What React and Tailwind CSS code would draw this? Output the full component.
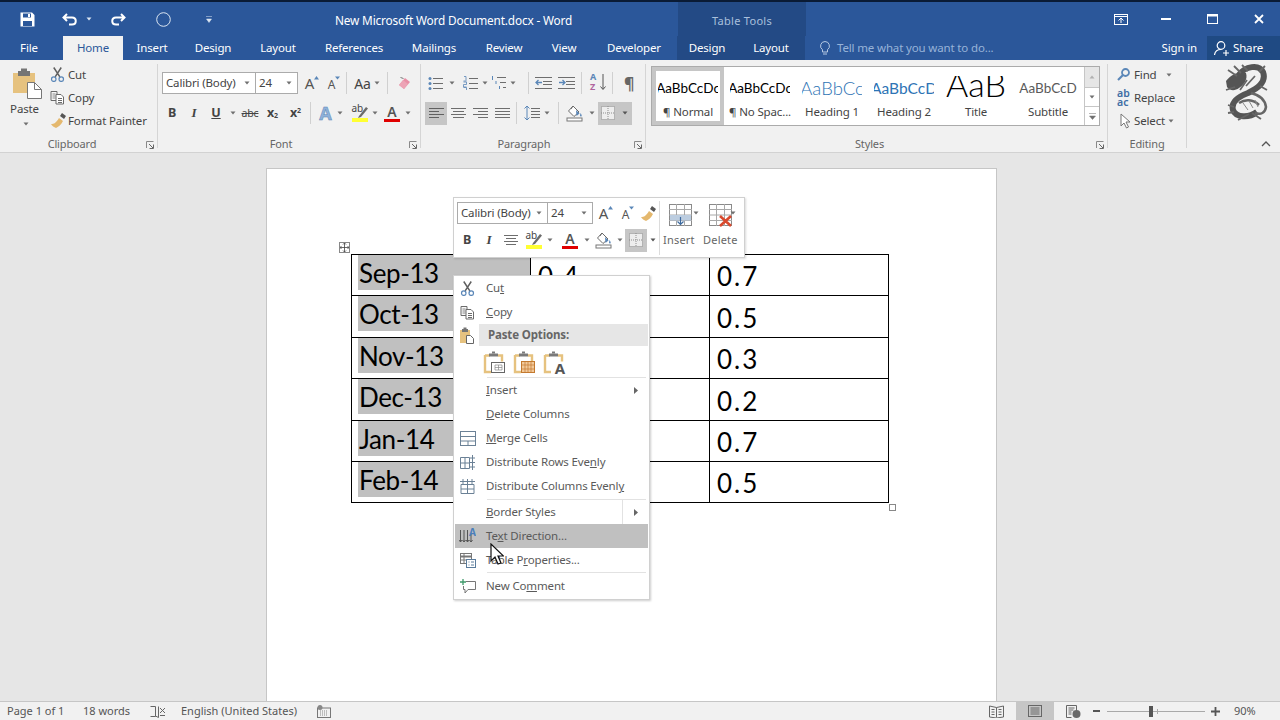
const TAN = '#e6c27f';
const BL = '#5b87b8';

function Ic({ w = 16, h = 16, className = '', children }) {
  return (
    <svg width={w} height={h} viewBox={`0 0 ${w} ${h}`} fill="none" className={`shrink-0 ${className}`}>
      {children}
    </svg>
  );
}

function Caret({ color = '#707070' }) {
  return (
    <Ic w={6} h={4}>
      <path d="M0.5 0.5h5L3 3.5z" fill={color} />
    </Ic>
  );
}

function Sep({ h = 'h-[22px]' }) {
  return <div className={`w-px bg-[#d0d0d0] ${h}`} />;
}

function Lines({ rows, x1 = 1, x2 = 13, color = '#6e6e6e' }) {
  return rows.map((y, i) => {
    const a = Array.isArray(x1) ? x1[i] : x1;
    const b = Array.isArray(x2) ? x2[i] : x2;
    return <path key={i} d={`M${a} ${y + 0.5}H${b}`} stroke={color} />;
  });
}

function Scissors({ size = 16 }) {
  return (
    <svg width={size} height={size} viewBox="0 0 16 16" fill="none" className="shrink-0">
      <path d="M4 0.5L10.5 10.5M12 0.5L5.5 10.5" stroke="#5f5f5f" strokeWidth="1.6" />
      <circle cx="4" cy="13" r="2.4" stroke={BL} strokeWidth="1.3" />
      <circle cx="12" cy="13" r="2.4" stroke={BL} strokeWidth="1.3" />
    </svg>
  );
}

function CopyIcon() {
  return (
    <Ic w={15} h={15}>
      <path d="M1 1.500h6v9H1z" stroke="#6b6b6b" fill="#f7f7f7" />
      <path d="M2.500 4h3M2.500 6h3M2.500 8h3" stroke="#8a8a8a" />
      <path d="M6 4.500h5l2.500 2.500v7H6z" stroke="#6b6b6b" fill="#fff" />
      <path d="M8 8.500h4M8 10.500h4M8 12.500h4" stroke="#6b6b6b" />
    </Ic>
  );
}

function Painter() {
  return (
    <Ic w={18} h={15}>
      <path d="M12 0l4 3-2 3-4-3z" fill="#555" />
      <path d="M1 11c3 0 5-1 8-6l4 3c-2 4-5 6-7 7-2-1-4-2-5-4z" fill="#e4b86e" />
    </Ic>
  );
}

function ClipSmall({ children }) {
  return (
    <Ic w={23} h={24}>
      <path d="M2 5.500h5M15 5.500h4v6M2 5v17h6" stroke={TAN} strokeWidth="2.400" />
      <path d="M6 3.500h9v3H6z" fill="#7a7a7a" />
      <path d="M9 1.500h3v2H9z" fill="#7a7a7a" />
      {children}
    </Ic>
  );
}

function TablePlus({ del }) {
  return (
    <Ic w={24} h={24}>
      <rect x="0.500" y="0.500" width="22" height="21" stroke="#8a8a8a" fill="#fff" />
      <path d="M7.500 0v22M15.500 0v22M0 5.500h23M0 11h23M0 16.500h23" stroke="#a8a8a8" />
      {del ? (
        <path d="M11 12l11 10M22 12L11 22" stroke="#d8492d" strokeWidth="2.600" />
      ) : (
        <>
          <path d="M1 11h21v5.500H1z" fill="#bccde0" />
          <path d="M11.500 13v7M8.500 17.500l3 3 3-3" stroke="#3d6a9e" strokeWidth="1.200" />
        </>
      )}
    </Ic>
  );
}

function BorderIcon() {
  return (
    <Ic w={14} h={14}>
      <rect x="0.500" y="0.500" width="13" height="13" fill="#ededed" stroke="#8d8d8d" strokeDasharray="1 1" />
      <path d="M7 0v14M0 7h14" stroke="#8d8d8d" strokeDasharray="1 1" />
    </Ic>
  );
}

function ShadeIcon() {
  return (
    <Ic w={18} h={17}>
      <path d="M7 1l6 6-5 4.500L2.500 6z" stroke="#6b6b6b" fill="#fff" />
      <path d="M7 1L5 4" stroke="#6b6b6b" />
      <path d="M10 5l3.500 3.500-3 2.500z" fill={BL} />
      <path d="M14.500 8c1 1.500 1.500 2.500 1 3.300-.6.5-1.500.2-1.500-.8z" fill={BL} />
      <rect x="1" y="13" width="15" height="3" stroke="#777" fill="#fff" />
    </Ic>
  );
}

function HighlightIcon() {
  return (
    <div className="relative h-[17px] w-[17px]">
      <span className="absolute left-0 top-[-3px] text-[10px] leading-[13px] text-[#444]">ab</span>
      <Ic w={17} h={17} className="absolute left-0 top-0">
        <path d="M7 11l7-9 2 1.500-7 8.500-3 1z" fill="#6b6b6b" />
        <rect x="0" y="13" width="16" height="4" fill="#ffff33" />
      </Ic>
    </div>
  );
}

function ColorA() {
  return (
    <div className="flex h-[17px] w-[17px] flex-col items-center">
      <span className="text-[14px] font-semibold leading-[13px] text-[#555]">A</span>
      <div className="mt-px h-[4px] w-[16px] bg-[#e00000]" />
    </div>
  );
}

function GrowA({ big, up }) {
  return (
    <div className="flex items-start text-[#555]">
      <span className={big ? 'text-[15px] leading-[18px]' : 'mt-[3px] text-[12px] leading-[15px]'}>A</span>
      <Ic w={5} h={4} className="mt-[2px]">
        <path d={up ? 'M0 3.500h5L2.500 0z' : 'M0 0.500h5L2.500 3.500z'} fill={BL} />
      </Ic>
    </div>
  );
}

function Combo({ className, children }) {
  return (
    <div className={`flex h-[22px] items-center justify-between border border-[#ababab] bg-white pl-[3px] pr-[5px] text-[11.5px] tracking-[-0.15px] text-[#444] ${className}`}>
      <span>{children}</span>
      <Caret />
    </div>
  );
}

function Group({ className, label, launcher = true, children }) {
  return (
    <div className={`relative flex flex-col ${className}`}>
      <div className="h-[76px]">{children}</div>
      <div className="relative h-[16px] text-center text-[11px] leading-[16px] text-[#666]">
        {label}
        {launcher && (
          <Ic w={8} h={8} className="absolute right-[3px] top-[5px]">
            <path d="M0.500 7V0.500H7.500" stroke="#8a8a8a" />
            <path d="M3 3l4 4M7.500 3.500v4h-4" stroke="#666" />
          </Ic>
        )}
      </div>
    </div>
  );
}

const tabs = [
  ['File', 'ml-0 w-[58px]'],
  ['Home', 'ml-[5px] w-[60px] bg-[#f1f1f1] !text-[#2b579a]'],
  ['Insert', 'w-[58px]'],
  ['Design', 'w-[64px]'],
  ['Layout', 'w-[66px]'],
  ['References', 'w-[86px]'],
  ['Mailings', 'w-[74px]'],
  ['Review', 'w-[66px]'],
  ['View', 'w-[54px]'],
  ['Developer', 'w-[86px]'],
  ['Design', 'w-[60px] bg-[#234a85]'],
  ['Layout', 'w-[68px] bg-[#234a85]'],
];

const styleItems = [
  ['AaBbCcDc', '¶ Normal', 'text-[13.5px] text-black'],
  ['AaBbCcDc', '¶ No Spac...', 'text-[13.5px] text-black'],
  ['AaBbCc', 'Heading 1', 'text-[18.5px] font-light text-[#2e74b5]'],
  ['AaBbCcD', 'Heading 2', 'text-[15.5px] text-[#2e74b5]'],
  ['AaB', 'Title', 'pb-[10px] text-[34px] font-light text-black'],
  ['AaBbCcD', 'Subtitle', 'text-[13.5px] tracking-[1px] text-[#5a5a5a]'],
];

function Ribbon() {
  return (
    <div className="flex h-[93px] border-b border-[#d2d2d2] bg-[#f1f1f1] text-[11.5px] tracking-[-0.15px] text-[#444]">
      {/* Clipboard */}
      <Group className="w-[157px]" label={<span className="pr-[13px]">Clipboard</span>}>
        <div className="flex">
          <div className="ml-[4px] flex w-[42px] flex-col items-center pl-[3px] pt-[8px]">
            <Ic w={30} h={31}>
              <path d="M1 5h22v20H1z" fill={TAN} />
              <path d="M6 3h12v5H6z" fill="#757575" />
              <path d="M9 0.500h6v3H9z" fill="#757575" />
              <path d="M15.500 14.500h7l7 7v9h-14z" fill="#fff" stroke="#777" />
              <path d="M22.500 14.500v7h7" stroke="#777" />
            </Ic>
            <span className="mt-[2px] -translate-x-[2px] leading-[16px]">Paste</span>
            <div className="mt-[5px] -translate-x-[1px]"><Caret /></div>
          </div>
          <div className="ml-[4px] flex flex-col pt-[3px]">
            <div className="flex h-[23px] items-center gap-[3px]"><Scissors size={15} /><span>Cut</span></div>
            <div className="flex h-[23px] items-center gap-[3px]"><CopyIcon /><span>Copy</span></div>
            <div className="flex h-[23px] items-center"><Painter /><span>Format Painter</span></div>
          </div>
        </div>
      </Group>
      <div className="mt-[4px] h-[84px] w-px bg-[#d5d5d5]" />

      {/* Font */}
      <Group className="w-[262px]" label={<span className="pr-[16px]">Font</span>}>
        <div className="mt-[12px] flex h-[22px] items-center pl-[4px]">
          <Combo className="w-[94px]">Calibri (Body)</Combo>
          <Combo className="-ml-px w-[43px]">24</Combo>
          <div className="ml-[3px] flex w-[22px] justify-center"><GrowA big up /></div>
          <div className="flex w-[22px] justify-center"><GrowA /></div>
          <div className="ml-[1px] mr-[4px]"><Sep /></div>
          <div className="flex w-[32px] items-center justify-center gap-[3px] text-[14px]">Aa<Caret /></div>
          <div className="mx-[4px]"><Sep /></div>
          <div className="flex w-[24px] justify-center">
            <Ic w={15} h={15}>
              <path d="M2 9l6-7 5 4-6 7z" fill="#e88fa6" />
              <path d="M2 9l4-5 5 4-4 5z" fill="#eda4b6" />
              <path d="M3.500 1.500l3 1" stroke="#777" />
            </Ic>
          </div>
        </div>
        <div className="mt-[7px] flex h-[24px] items-center pl-[3px] text-[#444]">
          <div className="w-[22px] text-center text-[12.5px] font-bold">B</div>
          <div className="w-[22px] text-center font-['Liberation_Serif',serif] text-[13px] font-bold italic">I</div>
          <div className="w-[22px] text-center text-[12.5px] font-bold underline">U</div>
          <div className="flex w-[12px] justify-center"><Caret /></div>
          <div className="w-[22px] text-center text-[10.5px] leading-[14px] line-through">abc</div>
          <div className="w-[23px] text-center text-[12.5px] font-bold">x<sub className="text-[7px]">2</sub></div>
          <div className="w-[23px] text-center text-[12.5px] font-bold">x<sup className="text-[7px]">2</sup></div>
          <div className="ml-[3px] mr-[5px]"><Sep /></div>
          <div className="flex w-[19px] justify-center text-[18px] font-bold leading-[18px] text-[#8fb1d9] [-webkit-text-stroke:0.5px_#5b87b8]">A</div>
          <div className="flex w-[10px] justify-center"><Caret /></div>
          <div className="ml-[6px] flex w-[18px] justify-center"><HighlightIcon /></div>
          <div className="ml-[1px] flex w-[10px] justify-center"><Caret /></div>
          <div className="ml-[3px] flex w-[18px] justify-center"><ColorA /></div>
          <div className="ml-[2px] flex w-[10px] justify-center"><Caret /></div>
        </div>
      </Group>
      <div className="mt-[4px] h-[84px] w-px bg-[#d5d5d5]" />

      {/* Paragraph */}
      <Group className="w-[224px]" label={<span className="pr-[18px]">Paragraph</span>}>
        <div className="mt-[12px] flex h-[22px] items-center pl-[7px]">
          <Ic w={15} h={14}>
            <Lines rows={[2, 7, 12]} x1={5} x2={15} />
            <circle cx="2" cy="2.500" r="1.500" fill={BL} /><circle cx="2" cy="7.500" r="1.500" fill={BL} /><circle cx="2" cy="12.500" r="1.500" fill={BL} />
          </Ic>
          <div className="ml-[6px]"><Caret /></div>
          <Ic w={15} h={14} className="ml-[8px]">
            <Lines rows={[2, 7, 12]} x1={6} x2={15} />
            <path d="M1 0.500h2v4M0.500 5h3M0.500 6h3v2.500h-3v2.500h3M0.500 11.500h3v3h-3" stroke={BL} strokeWidth="0.800" />
          </Ic>
          <div className="ml-[4px]"><Caret /></div>
          <Ic w={17} h={14} className="ml-[3px]">
            <Lines rows={[1, 6, 11]} x1={[6, 9, 12]} x2={15} />
            <path d="M1.500 0v4M5 5v3M8.500 10v3" stroke={BL} />
          </Ic>
          <div className="ml-[2px]"><Caret /></div>
          <div className="ml-[12px]"><Sep /></div>
          <Ic w={17} h={12} className="ml-[6px]">
            <Lines rows={[0, 11]} x1={0} x2={17} /><Lines rows={[4, 7]} x1={8} x2={17} />
            <path d="M7 5.500H1M3.500 3l-2.500 2.500 2.500 2.500" stroke={BL} strokeWidth="1.300" />
          </Ic>
          <Ic w={17} h={12} className="ml-[6px]">
            <Lines rows={[0, 11]} x1={0} x2={17} /><Lines rows={[4, 7]} x1={8} x2={17} />
            <path d="M1 5.500h6M4.500 3l2.500 2.500-2.500 2.500" stroke={BL} strokeWidth="1.300" />
          </Ic>
          <div className="ml-[6px]"><Sep /></div>
          <div className="relative ml-[8px] h-[18px] w-[18px]">
            <span className="absolute left-0 top-[-3px] text-[9px] font-bold leading-[12px] text-[#5b87b8]">A</span>
            <span className="absolute left-0 top-[7px] text-[9px] font-bold leading-[12px] text-[#b0649e]">Z</span>
            <Ic w={6} h={17} className="absolute right-[2px] top-0"><path d="M3 0v15M0.500 12.500L3 15.500l2.500-3" stroke="#555" /></Ic>
          </div>
          <div className="ml-[4px]"><Sep /></div>
          <div className="ml-[11px] text-[16px] font-bold leading-[16px] text-[#666]">¶</div>
        </div>
        <div className="mt-[7px] flex h-[24px] items-center pl-[4px]">
          <div className="flex h-[23px] w-[22px] items-center justify-center bg-[#c6c6c6]">
            <Ic w={15} h={11}><Lines rows={[0, 3, 6, 9]} x1={0} x2={[15, 10, 15, 10]} color="#606060" /></Ic>
          </div>
          <div className="flex w-[22px] justify-center"><Ic w={15} h={11}><Lines rows={[0, 3, 6, 9]} x1={[0, 2, 0, 2]} x2={[15, 13, 15, 13]} /></Ic></div>
          <div className="flex w-[22px] justify-center"><Ic w={15} h={11}><Lines rows={[0, 3, 6, 9]} x1={[0, 5, 0, 5]} x2={15} /></Ic></div>
          <div className="flex w-[22px] justify-center"><Ic w={15} h={11}><Lines rows={[0, 3, 6, 9]} x1={0} x2={15} /></Ic></div>
          <div className="ml-[3px]"><Sep /></div>
          <Ic w={16} h={16} className="ml-[7px]">
            <Lines rows={[3, 6, 9, 12]} x1={7} x2={16} />
            <path d="M3 1v14M0.500 3.500L3 1l2.500 2.500M0.500 12.500L3 15l2.500-2.500" stroke={BL} />
          </Ic>
          <div className="ml-[4px]"><Caret /></div>
          <div className="ml-[8px]"><Sep /></div>
          <div className="ml-[7px]"><ShadeIcon /></div>
          <div className="ml-[5px]"><Caret /></div>
          <div className="ml-[3px] flex h-[23px] w-[34px] items-center gap-[7px] bg-[#c6c6c6] pl-[3px]">
            <BorderIcon /><Caret color="#555" />
          </div>
        </div>
      </Group>
      <div className="mt-[4px] h-[84px] w-px bg-[#d5d5d5]" />

      {/* Styles */}
      <Group className="w-[461px]" label={<span className="pr-[14px]">Styles</span>}>
        <div className="ml-[5px] mt-[6px] flex h-[60px] w-[449px] border border-[#ababab] bg-white">
          {styleItems.map(([preview, name, cls], i) => (
            <div key={i} className={`flex w-[72px] flex-col items-center overflow-hidden ${i === 0 ? 'border-[4px] border-[#c6c6c6] pt-[5px]' : 'pt-[9px]'}`}>
              <div className={`flex h-[25px] w-[60px] shrink-0 items-center justify-center overflow-hidden whitespace-nowrap font-['Lato',sans-serif] leading-none tracking-normal ${cls}`}>{preview}</div>
              <div className="mt-[3px] whitespace-nowrap leading-[16px] text-[#444]">{name}</div>
            </div>
          ))}
          <div className="flex w-[15px] flex-col border-l border-[#c6c6c6] text-[#666]">
            <div className="flex h-[21px] items-center justify-center border-b border-[#c6c6c6] bg-[#e6e6e6]"><Ic w={6} h={4}><path d="M0.500 3.500h5L3 0.500z" fill="#b0b0b0" /></Ic></div>
            <div className="flex h-[19px] items-center justify-center border-b border-[#c6c6c6]"><Caret /></div>
            <div className="flex flex-1 items-center justify-center"><Ic w={7} h={7}><path d="M0 0.500h7M0.500 3h6L3.500 6.500z" fill="#707070" stroke="#707070" strokeWidth="0.500" /></Ic></div>
          </div>
        </div>
      </Group>
      <div className="mt-[4px] h-[84px] w-px bg-[#d5d5d5]" />

      {/* Editing */}
      <Group className="w-[78px]" label="Editing" launcher={false}>
        <div className="flex flex-col pl-[9px] pt-[3px]">
          <div className="flex h-[23px] items-center gap-[4px]">
            <Ic w={13} h={13}><circle cx="8.500" cy="4.500" r="3.500" stroke={BL} strokeWidth="1.800" /><path d="M6 7L1 12" stroke={BL} strokeWidth="2.200" /></Ic>
            <span>Find</span><span className="ml-[5px]"><Caret /></span>
          </div>
          <div className="flex h-[23px] items-center">
            <span className="w-[17px] text-[10.5px] font-semibold leading-[9px] tracking-normal text-[#3f6ea5]">ab<br />ac</span>
            <span>Replace</span>
          </div>
          <div className="flex h-[23px] items-center gap-[3px] pl-[3px]">
            <Ic w={11} h={16}><path d="M1 1v12l3-3 2.500 5 2-1-2.500-5h4z" stroke="#777" fill="#fff" /></Ic>
            <span>Select</span><Caret />
          </div>
        </div>
      </Group>
      <div className="mt-[4px] h-[84px] w-px bg-[#d5d5d5]" />

      {/* Dragon logo and collapse */}
      <div className="relative flex-1">
        <svg width="44" height="58" viewBox="0 0 44 58" fill="none" className="ml-[38px] mt-[3px] blur-[0.4px]">
          <path d="M14 12C20 3 34 1 38 9C42 20 31 26 23 30C12 34 6 40 8 47C11 55 24 55 32 49" stroke="#555" strokeWidth="6" />
          <path d="M26 30C34 32 40 36 41 44C40 50 36 52 30 50M14 40C20 36 28 36 34 42" stroke="#666" strokeWidth="2.500" />
          <path d="M1 18C6 11 14 8 21 10C23 16 19 22 14 25C10 28 5 28 2 24z" fill="#555" />
          <path d="M3 7l9 6M9 3l7 7M1 27l9-3M30 13l-9 10M35 23l7 4M22 17l-7 10M27 50l9 6M13 57l11-6M40 3l-6 6M17 2l6 6M3 42l6 2M3 50l6-1" stroke="#666" strokeWidth="1.800" />
          <path d="M18 40l5 7M24 38l4 7M30 37l3 7" stroke="#888" strokeWidth="1" />
        </svg>
        <Ic w={10} h={6} className="absolute bottom-[5px] right-[9px]"><path d="M1 5l4-4 4 4" stroke="#555" strokeWidth="1.300" /></Ic>
      </div>
    </div>
  );
}

function MiniToolbar() {
  return (
    <div className="absolute left-[453px] top-[197px] flex h-[61px] w-[292px] border border-[#d0d0d0] bg-white text-[11.5px] tracking-[-0.15px] text-[#444] shadow-[1px_1px_2px_rgba(0,0,0,0.15)]">
      <div className="w-[205px] pl-[3px] pt-[4px]">
        <div className="flex h-[22px] items-center">
          <Combo className="w-[91px]">Calibri (Body)</Combo>
          <Combo className="-ml-px w-[46px]">24</Combo>
          <div className="ml-[2px] flex w-[22px] justify-center"><GrowA big up /></div>
          <div className="flex w-[22px] justify-center"><GrowA /></div>
          <div className="flex w-[20px] justify-center"><Painter /></div>
        </div>
        <div className="-ml-[1px] mt-[4px] flex h-[24px] items-center">
          <div className="w-[22px] text-center text-[12.5px] font-bold">B</div>
          <div className="w-[22px] text-center font-['Liberation_Serif',serif] text-[13px] font-bold italic">I</div>
          <div className="flex w-[22px] justify-center"><Ic w={14} h={11}><Lines rows={[0, 3, 6, 9]} x1={[0, 2, 0, 2]} x2={[14, 12, 14, 12]} /></Ic></div>
          <div className="flex w-[24px] justify-center"><HighlightIcon /></div>
          <div className="flex w-[8px] justify-center"><Caret /></div>
          <div className="ml-[7px] flex w-[18px] justify-center"><ColorA /></div>
          <div className="ml-[3px] flex w-[10px] justify-center"><Caret /></div>
          <div className="ml-[3px] flex w-[18px] justify-center"><ShadeIcon /></div>
          <div className="ml-[2px] flex w-[10px] justify-center"><Caret /></div>
          <div className="flex h-[23px] w-[22px] items-center justify-center bg-[#c6c6c6]"><BorderIcon /></div>
          <div className="ml-[3px]"><Caret color="#555" /></div>
        </div>
      </div>
      <div className="mt-[3px] h-[54px] w-px bg-[#dcdcdc]" />
      <div className="flex flex-1 flex-col pt-[6px]">
        <div className="flex h-[25px] pl-[9px]">
          <TablePlus />
          <div className="mt-[7px]"><Caret /></div>
          <div className="ml-[10px]"><TablePlus del /></div>
          <div className="-ml-[3px] mt-[7px]"><Caret /></div>
        </div>
        <div className="mt-[3px] flex pl-[3px] text-[11px] leading-[16px] tracking-[0.2px] text-[#666]">
          <span className="w-[40px]">Insert</span>
          <span>Delete</span>
        </div>
      </div>
    </div>
  );
}

function MenuRow({ icon, children, hl, arrow, divider }) {
  return (
    <div className={`flex h-[24px] items-center ${hl ? 'bg-[#c0c0c0]' : ''}`}>
      <div className="flex w-[25px] justify-center">{icon}</div>
      <div className="ml-[6px] flex-1 whitespace-nowrap">{children}</div>
      {divider && <div className="mr-[11px] h-[24px] w-px bg-[#e2e2e2]" />}
      {arrow && (
        <Ic w={4} h={7} className="mr-[10px]"><path d="M0 0l4 3.500L0 7z" fill="#666" /></Ic>
      )}
    </div>
  );
}

function MenuLine({ className = '' }) {
  return <div className={`ml-[32px] mr-[2px] h-px bg-[#e2e2e2] ${className}`} />;
}

function ContextMenu() {
  return (
    <div className="absolute left-[453px] top-[275px] h-[325px] w-[197px] border border-[#d0d0d0] bg-white px-px text-[11.5px] tracking-[-0.15px] text-[#5a5a5a] shadow-[1px_1px_2px_rgba(0,0,0,0.2)]">
      <MenuRow icon={<Scissors size={15} />}>Cu<u>t</u></MenuRow>
      <MenuRow icon={<CopyIcon />}><u>C</u>opy</MenuRow>
      <div className="flex h-[22px] items-center">
        <div className="flex w-[24px] justify-center">
          <Ic w={16} h={17}>
            <path d="M1 3h10v13H1z" fill={TAN} />
            <path d="M3 2h6v3H3z" fill="#757575" /><path d="M4.500 0.500h3v2h-3z" fill="#757575" />
            <path d="M7.500 8.500h4l3 3v5h-7z" fill="#fff" stroke="#666" />
          </Ic>
        </div>
        <div className="flex h-full flex-1 items-center bg-[#e6e6e6] pl-[9px] font-bold text-[#666]">Paste Options:</div>
      </div>
      <div className="flex h-[31px] items-center gap-[7px] pl-[28px]">
        <ClipSmall>
          <rect x="8.500" y="12.500" width="13" height="10" fill="#fff" stroke="#666" />
          <path d="M12 15h7v5h-7zM15.500 15v5M12 17.500h7" stroke="#888" strokeWidth="0.700" />
        </ClipSmall>
        <ClipSmall>
          <rect x="8.500" y="11.500" width="13" height="11" fill="#f2c99a" stroke="#c47a30" />
          <path d="M12 11v12M15 11v12M18 11v12M8 15h14M8 19h14" stroke="#c47a30" strokeWidth="0.700" />
        </ClipSmall>
        <div className="relative">
          <ClipSmall />
          <span className="absolute bottom-[-2px] right-[1px] text-[15px] font-bold leading-[15px] text-[#555]">A</span>
        </div>
      </div>
      <MenuLine />
      <MenuRow arrow><u>I</u>nsert</MenuRow>
      <MenuRow><u>D</u>elete Columns</MenuRow>
      <MenuRow icon={
        <Ic w={16} h={15}>
          <rect x="0.500" y="0.500" width="15" height="14" stroke="#6b8196" />
          <path d="M0 5.500h16M0 10h16M8 10v5" stroke="#6b8196" />
        </Ic>
      }><u>M</u>erge Cells</MenuRow>
      <MenuRow icon={
        <Ic w={16} h={15}>
          <path d="M0.500 2.500h9v11h-9zM5 2v12M0 8h10" stroke="#6b8196" />
          <path d="M12.500 0v15M10 3h5M10 7.500h5M10 12h5" stroke="#6b8196" />
        </Ic>
      }>Distribute Rows Eve<u>n</u>ly</MenuRow>
      <MenuRow icon={
        <Ic w={15} h={15}>
          <path d="M1 5.500h13v9H1zM7.500 5v10M1 10h13" stroke="#6b8196" />
          <path d="M0 2.500h15M3 0v5M7.500 0v5M12 0v5" stroke="#6b8196" />
        </Ic>
      }>Distribute Columns Evenl<u>y</u></MenuRow>
      <MenuLine className="mt-px" />
      <MenuRow arrow divider><u>B</u>order Styles</MenuRow>
      <MenuRow hl icon={
        <Ic w={17} h={16}>
          <path d="M1.500 2v12M5 2v12M8.500 2v12M0 12l1.500 2L3 12M3.500 12L5 14l1.500-2M7 12l1.500 2 1.500-2" stroke="#555" />
          <path d="M12 14V6M10.500 12l1.500 2 1.500-2" stroke="#555" />
          <text x="10" y="8" fontSize="10" fontWeight="700" fill="#4a7ebb">A</text>
        </Ic>
      }>Te<u>x</u>t Direction...</MenuRow>
      <MenuRow icon={
        <Ic w={16} h={15}>
          <rect x="0.500" y="0.500" width="11" height="10" fill="#fff" stroke="#777" />
          <path d="M0 3.500h12" stroke="#777" strokeWidth="2" />
          <path d="M4 0v11M0 7h12" stroke="#777" />
          <rect x="6.500" y="6.500" width="9" height="8" fill="#fff" stroke="#5b7c9c" />
          <path d="M8.500 9h1M8.500 12h1M11 9h3M11 12h3" stroke="#5b7c9c" />
        </Ic>
      }>Table P<u>r</u>operties...</MenuRow>
      <MenuLine className="mb-px" />
      <MenuRow icon={
        <Ic w={16} h={15}>
          <path d="M6 2.500h9.500v8H8L5 14v-3.500H3.500V7" stroke="#777" />
          <path d="M3 0v6M0 3h6" stroke="#3f9a6b" strokeWidth="1.300" />
        </Ic>
      }>New Co<u>m</u>ment</MenuRow>
    </div>
  );
}

const rows = [
  ['Sep-13', '0.4', '0.7', 'h-[41px]'],
  ['Oct-13', '', '0.5', 'h-[42px]'],
  ['Nov-13', '', '0.3', 'h-[41px]'],
  ['Dec-13', '', '0.2', 'h-[42px]'],
  ['Jan-14', '', '0.7', 'h-[41px]'],
  ['Feb-14', '', '0.5', 'h-[41px]'],
];

function DocTable() {
  return (
    <div className="relative ml-[84px] mt-[85px] w-[537px]">
      <div className="absolute left-[-12px] top-[-12px] flex h-[11px] w-[11px] items-center justify-center border border-[#888] bg-white">
        <Ic w={9} h={9}><path d="M4.500 0v9M0 4.500h9M3 1.500L4.500 0 6 1.500M3 7.500L4.500 9 6 7.500M1.500 3L0 4.500 1.500 6M7.500 3L9 4.500 7.500 6" stroke="#444" strokeWidth="0.800" /></Ic>
      </div>
      <table className="w-[537px] table-fixed border-collapse font-['Lato',sans-serif] text-[26px] text-black">
        <tbody>
          {rows.map(([a, b, c, h]) => (
            <tr key={a} className={h}>
              <td className="w-[179px] border border-black p-0 align-top">
                <div className="ml-[6px] flex h-[35px] items-center bg-[#c0c0c0] pl-px leading-none tracking-[-0.4px]">{a}</div>
              </td>
              <td className="w-[179px] border border-black px-[7px] pb-0 pt-[2px] align-middle leading-none tracking-[2px]">{b}</td>
              <td className="w-[179px] border border-black px-[7px] pb-0 pt-[2px] align-middle leading-none tracking-[2px]">{c}</td>
            </tr>
          ))}
        </tbody>
      </table>
      <div className="absolute bottom-[-8px] right-[-8px] h-[7px] w-[7px] border border-[#888] bg-white" />
    </div>
  );
}

function StatusBar() {
  return (
    <div className="flex h-[19px] items-center border-t border-[#c6c6c6] bg-[#f1f1f1] text-[11px] text-[#555]">
      <span className="ml-[7px] w-[76px]">Page 1 of 1</span>
      <span className="w-[67px]">18 words</span>
      <Ic w={16} h={13}>
        <path d="M0.500 1.500h5v10h-5M8.500 1.500v11L5.500 11" stroke="#666" />
        <path d="M10 3l5 5M15 3l-5 5M10 10.500h5" stroke="#666" />
      </Ic>
      <span className="ml-[15px] w-[136px]">English (United States)</span>
      <Ic w={14} h={13}>
        <rect x="0.500" y="3" width="13" height="9.500" stroke="#777" />
        <circle cx="3" cy="2.500" r="2.500" fill="#888" />
        <path d="M3 6h8M3 8h8M3 10h8" stroke="#888" strokeDasharray="1 1" />
      </Ic>
      <div className="flex-1" />
      <Ic w={16} h={13}>
        <path d="M0.500 1l7 1.500 7-1.500v11l-7 1-7-1zM7.500 2.500v10M2.500 4.500h3M2.500 7h3M2.500 9.500h3M9.500 4.500h3M9.500 7h3M9.500 9.500h3" stroke="#666" />
      </Ic>
      <div className="ml-[11px] flex h-[18px] w-[38px] items-center justify-center bg-[#c6c6c6]">
        <Ic w={14} h={12}><rect x="0.500" y="0.500" width="13" height="11" stroke="#666" /><path d="M2.500 3h9M2.500 5h9M2.500 7h9M2.500 9h9" stroke="#666" /></Ic>
      </div>
      <Ic w={15} h={13} className="ml-[12px]">
        <path d="M0.500 0.500h10v6M0.500 0.500v12h5M2.500 3h6M2.500 5h5M2.500 7h3M2.500 9h3" stroke="#666" />
        <circle cx="10.500" cy="9" r="4" fill="#6a6a6a" />
      </Ic>
      <Ic w={7} h={2} className="ml-[12px]"><rect width="7" height="2" fill="#555" /></Ic>
      <div className="relative ml-[7px] h-px w-[98px] bg-[#a9a9a9]">
        <div className="absolute left-[42px] top-[-5px] h-[11px] w-[4px] bg-[#555]" />
        <div className="absolute left-[50px] top-[-2px] h-[5px] w-px bg-[#a9a9a9]" />
      </div>
      <Ic w={9} h={9} className="ml-[6px]"><path d="M4.500 0v9M0 4.500h9" stroke="#555" strokeWidth="1.800" /></Ic>
      <span className="ml-[14px] w-[32px]">90%</span>
      <div className="w-[14px]" />
    </div>
  );
}

export default function App() {
  return (
    <div className="relative flex h-[720px] w-[1280px] flex-col overflow-hidden bg-[#e6e6e6] font-['Noto_Sans',sans-serif]">
      {/* Title bar */}
      <div className="h-[2px] bg-[#0a1b35]" />
      <div className="flex h-[34px] items-center bg-[#2b579a] text-white">
        <Ic w={15} h={15} className="ml-[20px]">
          <path d="M0.500 0.500h11.500l2.500 2.500v11.500H0.500z" fill="#fff" />
          <path d="M3 1.500h8v4H3zM3 9h9v5H3z" fill="#2b579a" />
          <path d="M8 2h2v3H8z" fill="#fff" />
        </Ic>
        <Ic w={16} h={13} className="ml-[27px]"><path d="M5 1L1.500 4.500 5 8M2 4.500h8c5 0 5 7 0 7H7" stroke="#fff" strokeWidth="2" /></Ic>
        <div className="ml-[8px]"><Caret color="#dce6f2" /></div>
        <Ic w={16} h={13} className="ml-[18px]"><path d="M11 1l3.500 3.500L11 8M14 4.500H6c-5 0-5 7 0 7h3" stroke="#fff" strokeWidth="2" /></Ic>
        <Ic w={15} h={15} className="ml-[30px]"><circle cx="7.500" cy="7.500" r="6.800" stroke="#dce6f2" /></Ic>
        <Ic w={6} h={7} className="ml-[35px]"><path d="M0 0.500h6M0.500 3h5L3 6.500z" fill="#dce6f2" stroke="#dce6f2" strokeWidth="0.500" /></Ic>
        <span className="ml-[123px] w-[343px] pt-[4px] text-[11.8px] leading-none tracking-[-0.15px]">New Microsoft Word Document.docx - Word</span>
        <div className="flex h-full w-[128px] items-center justify-center bg-[#234a85] pt-[4px] text-[11px] tracking-[0.3px] text-[#a9c0dd]">Table Tools</div>
        <Ic w={14} h={11} className="ml-[308px]">
          <rect x="0.500" y="0.500" width="13" height="10" stroke="#fff" />
          <path d="M0 2.500h14M7 9V4M4.500 6.500L7 4l2.500 2.500" stroke="#fff" />
        </Ic>
        <div className="ml-[33px] h-[2px] w-[10px] bg-white" />
        <Ic w={11} h={10} className="ml-[36px]"><rect x="0.500" y="0.500" width="10" height="9" stroke="#fff" /><path d="M0 1.500h11" stroke="#fff" strokeWidth="2" /></Ic>
        <Ic w={10} h={10} className="ml-[36px]"><path d="M1 1l8 8M9 1l-8 8" stroke="#fff" strokeWidth="1.800" /></Ic>
      </div>

      {/* Tabs */}
      <div className="flex h-[24px] bg-[#2b579a] text-[11.5px] tracking-[-0.15px] text-white">
        {tabs.map(([name, cls], i) => (
          <div key={i} className={`flex items-center justify-center ${cls}`}>{name}</div>
        ))}
        <div className="ml-[15px] flex items-center gap-[7px] text-[#97b3d8]">
          <Ic w={10} h={14}>
            <path d="M5 0.500a4.500 4.500 0 0 1 2.500 8.200V11h-5V8.700A4.500 4.500 0 0 1 5 0.500zM3 13h4" stroke="#b6c9e3" />
          </Ic>
          <span>Tell me what you want to do...</span>
        </div>
        <div className="flex-1" />
        <div className="mr-[10px] flex items-center">Sign in</div>
        <div className="flex w-[73px] items-center gap-[4px] bg-[#1f4a83] pl-[7px]">
          <Ic w={15} h={15}>
            <circle cx="7" cy="4.500" r="3.800" stroke="#fff" strokeWidth="1.200" />
            <path d="M0.500 14c0.500-3.500 3-5.500 6.500-5.500M12 9v6M9 12h6" stroke="#fff" strokeWidth="1.200" />
          </Ic>
          <span>Share</span>
        </div>
      </div>

      <Ribbon />

      {/* Document area */}
      <div className="flex-1 overflow-hidden">
        <div className="ml-[266px] mt-[15px] h-[540px] w-[731px] overflow-hidden border border-[#c6c6c6] bg-white">
          <DocTable />
        </div>
      </div>

      <StatusBar />

      <MiniToolbar />
      <ContextMenu />

      {/* Mouse pointer */}
      <svg width="14" height="23" viewBox="0 0 14 23" className="absolute left-[490px] top-[543px]">
        <path d="M1 1v17l4-4 3 7 3-1-3-7h5.500z" fill="#fff" stroke="#111" strokeWidth="1.200" />
      </svg>
    </div>
  );
}
